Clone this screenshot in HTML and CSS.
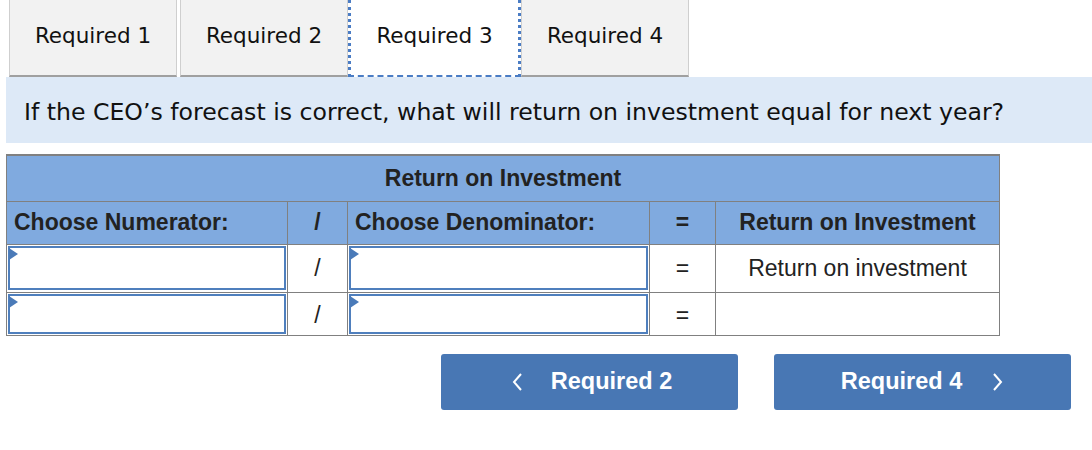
FILE: index.html
```html
<!DOCTYPE html>
<html>
<head>
<meta charset="utf-8">
<link rel="stylesheet" href="styles.css">
</head>
<body>
<div class="page">
  <div class="tabs">
    <div class="tab">Required 1</div>
    <div class="tab">Required 2</div>
    <div class="tab active">Required 3</div>
    <div class="tab">Required 4</div>
  </div>
  <div class="question">If the CEO’s forecast is correct, what will return on investment equal for next year?</div>
  <table class="roi">
    <colgroup>
      <col class="c1"><col class="c2"><col class="c3"><col class="c4"><col class="c5">
    </colgroup>
    <tr class="title"><th colspan="5">Return on Investment</th></tr>
    <tr class="head">
      <th class="left">Choose Numerator:</th>
      <th>/</th>
      <th class="left">Choose Denominator:</th>
      <th>=</th>
      <th>Return on Investment</th>
    </tr>
    <tr class="r1">
      <td class="inp"><div class="box"><span class="tri"></span></div></td>
      <td class="op">/</td>
      <td class="inp"><div class="box"><span class="tri"></span></div></td>
      <td class="op">=</td>
      <td class="res">Return on investment</td>
    </tr>
    <tr class="r2">
      <td class="inp"><div class="box"><span class="tri"></span></div></td>
      <td class="op">/</td>
      <td class="inp"><div class="box"><span class="tri"></span></div></td>
      <td class="op">=</td>
      <td class="res"></td>
    </tr>
  </table>
  <div class="nav">
    <button class="btn prev"><svg class="chev" width="12" height="20" viewBox="0 0 12 20"><polyline points="10,2 3,10 10,18" fill="none" stroke="#fff" stroke-width="2"/></svg><span>Required 2</span></button>
    <button class="btn next"><span>Required 4</span><svg class="chev" width="12" height="20" viewBox="0 0 12 20"><polyline points="2,2 9,10 2,18" fill="none" stroke="#fff" stroke-width="2"/></svg></button>
  </div>
</div>
</body>
</html>
```
FILE: styles.css
```css
* { box-sizing: border-box; }
body { margin: 0; background: #fff; }
.page { padding-left: 6px; }
.tabs { display: flex; height: 77px; padding-left: 3px; }
.tab {
  width: 168px;
  height: 77px;
  margin-right: 3px;
  background: #f2f2f2;
  border: 1px solid #cfcfcf;
  border-bottom: 2px solid #a0a0a0;
  border-top: none;
  font-family: "DejaVu Sans", Verdana, sans-serif;
  font-size: 21.5px;
  color: #111;
  display: flex;
  align-items: center;
  justify-content: center;
  padding-bottom: 4px;
}
.tab:nth-child(2) { margin-right: 0; }
.tab.active {
  width: 173px;
  margin-right: 0;
  background: #fff;
  border: 3px dotted #4a7cc4;
  border-top: none;
  border-bottom: 2px dashed #4a7cc4;
  padding-bottom: 4px;
}
.question {
  background: #dde9f7;
  height: 66px;
  padding-left: 18px;
  padding-top: 3px;
  display: flex;
  align-items: center;
  font-family: "DejaVu Sans", Verdana, sans-serif;
  font-size: 23.6px;
  color: #111;
}
.roi {
  margin-top: 11px;
  border-collapse: collapse;
  width: 993px;
  table-layout: fixed;
  font-family: "Liberation Sans", Arial, sans-serif;
  color: #222;
}
col.c1 { width: 281px; }
col.c2 { width: 60px; }
col.c3 { width: 302px; }
col.c4 { width: 66px; }
col.c5 { width: 284px; }
.roi th, .roi td { border: 1px solid #808080; padding: 0; }
.roi th { background: #80aadf; font-weight: bold; font-size: 23px; text-align: center; }
.roi th.left { text-align: left; padding-left: 7px; }
.title th { height: 46px; border-top: 2px solid #808080; }
.head th { height: 43px; }
.r1 td { height: 48px; }
.r2 td { height: 43px; }
.op { text-align: center; font-size: 23px; }
.res { text-align: center; font-size: 23px; }
.r1 .op, .r1 .res { vertical-align: top; padding-top: 10px !important; }
.r2 .op { vertical-align: top; padding-top: 9px !important; }
.inp { padding: 1px 0 0 1px !important; vertical-align: top; }
.box {
  position: relative;
  width: calc(100% - 1px);
  height: 44px;
  border: 2px solid #4f7fbd;
  background: #fff;
}
.r2 .box { height: 40px; }
.tri {
  position: absolute;
  left: -1px;
  top: 0;
  width: 0;
  height: 0;
  border-top: 6px solid transparent;
  border-bottom: 6px solid transparent;
  border-left: 9px solid #4a7ab8;
}
.nav {
  display: flex;
  justify-content: flex-end;
  gap: 36px;
  padding-right: 21px;
  margin-top: 18px;
}
.btn {
  width: 297px;
  height: 56px;
  border: none;
  border-radius: 3px;
  background: #4877b4;
  color: #fff;
  font-family: "Liberation Sans", Arial, sans-serif;
  font-weight: bold;
  font-size: 23.5px;
  display: flex;
  align-items: center;
  justify-content: center;
  gap: 28px;
  padding: 0;
}
.btn.prev { padding-left: 4px; }
.btn.next { padding-left: 0; gap: 30px; }
.chev { display: block; }
```
